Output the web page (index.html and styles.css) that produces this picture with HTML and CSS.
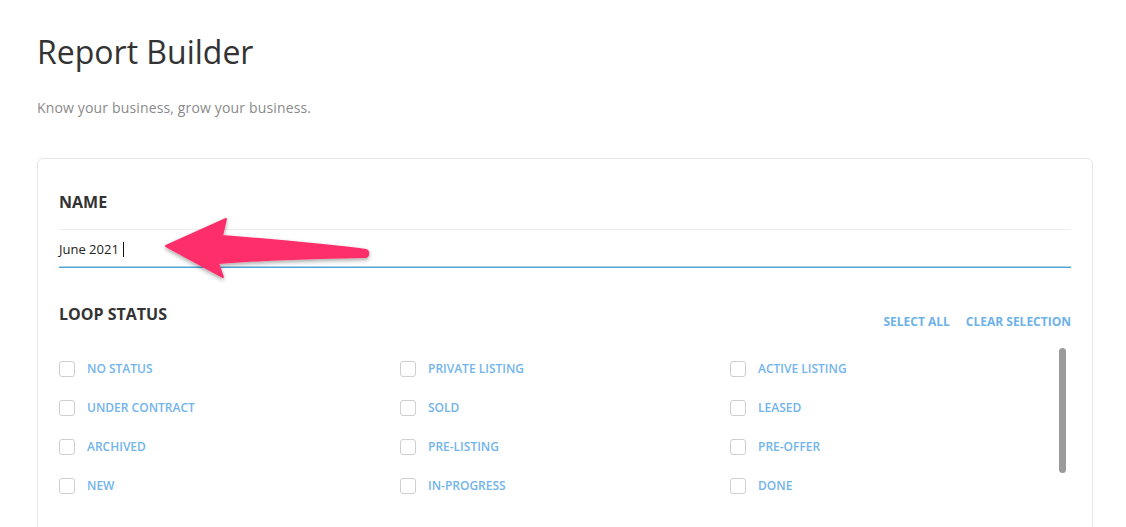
FILE: index.html
```html
<!DOCTYPE html>
<html>
<head>
<meta charset="utf-8">
<link rel="stylesheet" href="styles.css">
</head>
<body>
<div class="page">
  <h1 class="title">Report Builder</h1>
  <p class="subtitle">Know your business, grow your business.</p>
  <div class="card">
    <div class="label">NAME</div>
    <div class="divider"></div>
    <div class="input"><span class="input-text">June 2021</span><span class="caret"></span></div>
    <div class="underline"></div>
    <div class="section-head">
      <div class="label">LOOP STATUS</div>
      <div class="links"><span class="link">SELECT ALL</span><span class="link">CLEAR SELECTION</span></div>
    </div>
    <div class="list-wrap">
      <div class="grid">
        <label class="item"><span class="box"></span><span class="item-text">NO STATUS</span></label>
        <label class="item"><span class="box"></span><span class="item-text">PRIVATE LISTING</span></label>
        <label class="item"><span class="box"></span><span class="item-text">ACTIVE LISTING</span></label>
        <label class="item"><span class="box"></span><span class="item-text">UNDER CONTRACT</span></label>
        <label class="item"><span class="box"></span><span class="item-text">SOLD</span></label>
        <label class="item"><span class="box"></span><span class="item-text">LEASED</span></label>
        <label class="item"><span class="box"></span><span class="item-text">ARCHIVED</span></label>
        <label class="item"><span class="box"></span><span class="item-text">PRE-LISTING</span></label>
        <label class="item"><span class="box"></span><span class="item-text">PRE-OFFER</span></label>
        <label class="item"><span class="box"></span><span class="item-text">NEW</span></label>
        <label class="item"><span class="box"></span><span class="item-text">IN-PROGRESS</span></label>
        <label class="item"><span class="box"></span><span class="item-text">DONE</span></label>
      </div>
      <div class="scrollbar"></div>
    </div>
  </div>
</div>
<svg class="arrow" width="240" height="90" viewBox="150 205 240 90" xmlns="http://www.w3.org/2000/svg">
  <defs>
    <filter id="sh" x="-20%" y="-40%" width="140%" height="180%">
      <feDropShadow dx="0" dy="2" stdDeviation="2" flood-color="#000" flood-opacity="0.35"/>
    </filter>
  </defs>
  <path filter="url(#sh)" fill="#fd2e6b" stroke="#fd2e6b" stroke-width="2" stroke-linejoin="round"
    d="M166 246 L226 219 L222 236 C270 240 330 245 366 250 C369 251 369 256 366 257 C320 258 270 259 218 263 L223 277 Z"/>
</svg>
</body>
</html>
```
FILE: styles.css
```css
html, body {
  margin: 0;
  padding: 0;
  background: #ffffff;
  overflow: hidden;
}
body {
  font-family: "Open Sans", "Liberation Sans", sans-serif;
  color: #333333;
  position: relative;
  height: 527px;
}
.page {
  padding: 0 33px 0 37px;
}
.title {
  margin: 0;
  padding-top: 30px;
  font-size: 32px;
  font-weight: 400;
  line-height: 44px;
  color: #333333;
}
.subtitle {
  margin: 24px 0 0 0;
  font-size: 14px;
  line-height: 20px;
  color: #8a8a8a;
  letter-spacing: 0.15px;
}
.card {
  margin-top: 40px;
  border: 1px solid #e6e6e6;
  border-radius: 6px;
  padding: 32px 21px 60px 21px;
  min-height: 400px;
}
.label {
  font-size: 16px;
  font-weight: 700;
  line-height: 22px;
  color: #333333;
}
.divider {
  margin-top: 16px;
  height: 1px;
  background: #ececec;
}
.input {
  box-sizing: border-box;
  height: 36px;
  padding-top: 2px;
  display: flex;
  align-items: center;
}
.underline {
  height: 2px;
  background: linear-gradient(to bottom, #a9d3ec 0, #a9d3ec 1px, #4ea5d8 1px, #4ea5d8 2px);
}
.input-text {
  font-size: 13px;
  color: #222222;
}
.caret {
  display: inline-block;
  width: 1px;
  height: 15px;
  background: #111111;
  margin-left: 4px;
}
.section-head {
  margin-top: 35px;
  display: flex;
  justify-content: space-between;
  align-items: flex-start;
}
.links {
  padding-top: 11px;
  display: flex;
  gap: 16px;
}
.link {
  font-size: 12px;
  font-weight: 700;
  line-height: 16px;
  color: #6db2ea;
}
.list-wrap {
  margin-top: 19px;
  display: flex;
  align-items: flex-start;
}
.grid {
  flex: 1;
  display: grid;
  grid-template-columns: 341px 330px 1fr;
  grid-auto-rows: 39px;
}
.item {
  display: flex;
  align-items: center;
}
.box {
  width: 14px;
  height: 14px;
  border: 1px solid #cfcfcf;
  border-radius: 3px;
  margin-right: 12px;
  flex: none;
}
.item-text {
  font-size: 12px;
  font-weight: 600;
  color: #72b4ec;
}
.scrollbar {
  width: 7px;
  height: 125px;
  border-radius: 4px;
  background: #9a9a9a;
  margin-right: 5px;
  margin-top: -1px;
}
.arrow {
  position: absolute;
  left: 150px;
  top: 205px;
}
```
